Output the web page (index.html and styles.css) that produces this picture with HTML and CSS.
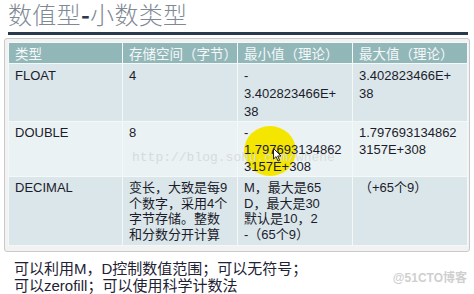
FILE: index.html
```html
<!DOCTYPE html>
<html>
<head>
<meta charset="utf-8">
<link rel="stylesheet" href="styles.css">
</head>
<body>
<div class="page">
  <h1 class="title">数值型<span class="dash">-</span>小数类型</h1>
  <div class="rule"></div>
  <div class="frame">
    <table class="grid">
      <colgroup>
        <col class="c1"><col class="c2"><col class="c3"><col class="c4">
      </colgroup>
      <thead>
        <tr class="head">
          <th>类型</th>
          <th>存储空间（字节）</th>
          <th>最小值（理论）</th>
          <th>最大值（理论）</th>
        </tr>
      </thead>
      <tbody>
        <tr class="r-float">
          <td>FLOAT</td>
          <td>4</td>
          <td>-<br>3.402823466E+<br>38</td>
          <td>3.402823466E+<br>38</td>
        </tr>
        <tr class="r-double">
          <td>DOUBLE</td>
          <td>8<div class="wm">http://blog.sohu.com/whehe</div></td>
          <td class="hl-cell"><span class="spot"></span><svg class="cursor" width="9" height="14" viewBox="0 0 9 14"><path d="M0.5 0.5 L0.5 11 L3 8.6 L5 13 L6.6 12.3 L4.7 8 L8 8 Z" fill="#fff" stroke="#222" stroke-width="1"/></svg><span class="txt">-<br>1.797693134862<br>3157E+308</span></td>
          <td>1.797693134862<br>3157E+308</td>
        </tr>
        <tr class="r-decimal">
          <td>DECIMAL</td>
          <td>变长，大致是每9<br>个数字，采用4个<br>字节存储。整数<br>和分数分开计算</td>
          <td>M，最大是65<br>D，最大是30<br>默认是10，2<br>-（65个9）</td>
          <td>（+65个9）</td>
        </tr>
      </tbody>
    </table>
  </div>
  <div class="notes">
    <p>可以利用M，D控制数值范围；可以无符号；</p>
    <p>可以<span class="sp">zerofill</span>；可以使用科学计数法</p>
  </div>
  <div class="brand">@51CTO博客</div>
</div>
</body>
</html>
```

FILE: styles.css
```css
html, body {
  margin: 0;
  padding: 0;
  background: #fff;
}
.page {
  position: relative;
  width: 474px;
  height: 294px;
  overflow: hidden;
  font-family: "Liberation Sans", "Noto Sans CJK SC", sans-serif;
}
.title {
  margin: 0;
  padding: 0 0 0 8px;
  font-family: "Noto Sans CJK SC", sans-serif;
  font-weight: 300;
  font-size: 24px;
  line-height: 28px;
  color: #7f8a94;
  letter-spacing: 0.3px;
}
.title .dash {
  color: #2c3a4e;
  font-weight: 700;
}
.rule {
  margin: 4px 6px 0 8px;
  height: 3px;
  background: #2b394d;
}
.frame {
  margin: 3px 4px 0 4px;
  border: 1px solid #c9c9c9;
  border-radius: 3px;
  background: #f2f2f2;
  padding: 3px 2px 5px 3px;
}
.grid {
  width: 459px;
  border-collapse: collapse;
  table-layout: fixed;
  font-size: 13px;
  color: #1c1c2c;
}
.c1 { width: 114px; }
.c2 { width: 115px; }
.c3 { width: 115px; }
.c4 { width: 115px; }
.grid th, .grid td {
  border: 1px solid #f4f8f8;
  padding: 3px 5px 0 6px;
  vertical-align: top;
  text-align: left;
}
.grid th {
  background: #92b7b9;
  color: #f4f8f8;
  font-weight: 400;
  font-size: 13.5px;
  line-height: 17px;
  height: 18px;
  padding-top: 2px;
  font-family: "Noto Sans CJK SC", sans-serif;
}
.r-float td {
  background: #dae6e9;
  line-height: 18px;
  height: 51px;
}
.r-double td {
  background: #ebf2f3;
  line-height: 17px;
  height: 52px;
  padding-top: 2px;
  position: relative;
}
.r-decimal td {
  background: #dae6e9;
  line-height: 15.5px;
  height: 65px;
}
.wm {
  position: absolute;
  left: 9px;
  top: 27px;
  white-space: nowrap;
  font-family: "Liberation Mono", monospace;
  font-size: 13px;
  color: #d6dcdc;
  z-index: 2;
}
.hl-cell .txt {
  position: relative;
  z-index: 3;
}
.spot {
  position: absolute;
  left: 6px;
  top: 4px;
  width: 52px;
  height: 50px;
  border-radius: 50%;
  background: radial-gradient(circle, #f4e600 0%, #f4e600 78%, rgba(244,230,0,0.4) 92%, rgba(244,230,0,0) 100%);
  z-index: 1;
}
.cursor {
  position: absolute;
  left: 35px;
  top: 26px;
  z-index: 4;
}
.notes {
  padding: 8px 0 0 14px;
  font-size: 15px;
  line-height: 17px;
  color: #1e2233;
}
.notes p {
  margin: 0;
}
.sp {
  text-decoration: underline wavy #e07070;
  text-decoration-thickness: 1px;
  text-underline-offset: 2px;
}
.brand {
  position: absolute;
  right: 7px;
  bottom: 9px;
  font-size: 12px;
  font-weight: 700;
  color: #cfcfcf;
}
```
